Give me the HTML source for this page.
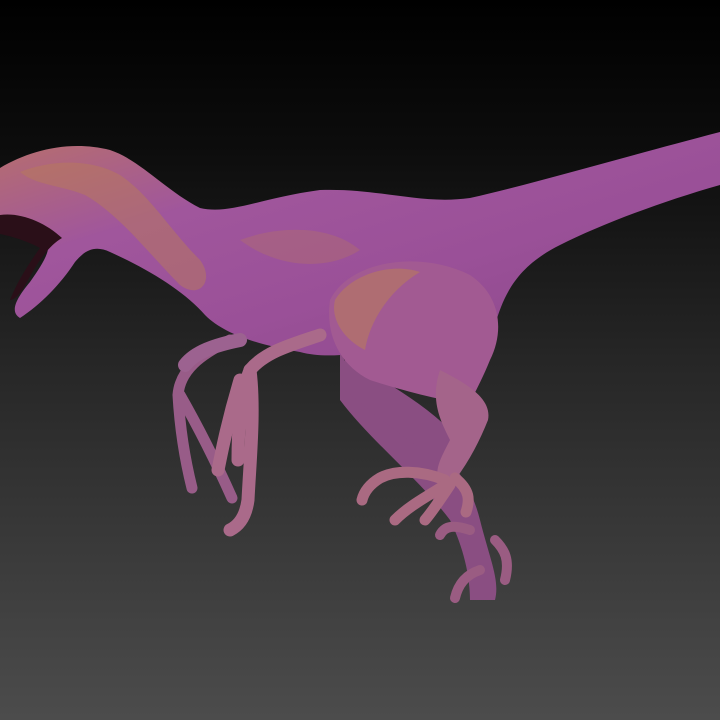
<!DOCTYPE html>
<html><head><meta charset="utf-8"><style>
html,body{margin:0;padding:0;width:720px;height:720px;overflow:hidden;background:#000}
svg{display:block}
</style></head><body>
<svg width="720" height="720" viewBox="0 0 720 720" xmlns="http://www.w3.org/2000/svg">
<defs>
<linearGradient id="bg" x1="0" y1="0" x2="0" y2="1">
<stop offset="0" stop-color="#000"/>
<stop offset="0.2" stop-color="#0c0c0c"/>
<stop offset="0.5" stop-color="#262626"/>
<stop offset="1" stop-color="#4c4c4c"/>
</linearGradient>
<linearGradient id="skin" x1="0" y1="0" x2="1" y2="1">
<stop offset="0" stop-color="#b8706a"/>
<stop offset="0.3" stop-color="#a0569c"/>
<stop offset="0.6" stop-color="#9a5098"/>
<stop offset="1" stop-color="#8a4888"/>
</linearGradient>
</defs>
<rect width="720" height="720" fill="url(#bg)"/>
<path d="M340,350 C360,400 400,420 430,440 C450,460 470,480 480,520 C490,560 500,580 495,600 L470,600 C470,570 460,540 450,520 C420,480 370,440 340,400 Z" fill="#8a4e82"/>
<path d="M345,355 C380,380 420,400 450,430 L455,470 C420,450 380,420 345,390 Z" fill="#8a4e82"/>
<g stroke="#9a5c82" stroke-width="10" stroke-linecap="round" fill="none">
<path d="M470,530 C455,525 445,525 440,535"/>
<path d="M480,570 C465,575 458,585 455,598"/>
<path d="M495,540 C505,550 510,560 505,580"/>
</g>
<g stroke="#985c88" stroke-width="11" stroke-linecap="round" fill="none">
<path d="M230,340 C200,355 180,370 178,395 C180,430 185,460 192,488"/>
<path d="M180,395 C200,430 215,460 232,498"/>
</g>
<path d="M0,168 C30,150 70,140 110,150 C140,160 165,190 200,208 C230,215 260,198 320,190 C380,188 420,205 470,198 C540,182 620,158 720,132 L720,185 C660,202 600,225 560,245 C520,265 505,290 495,325 C480,345 440,352 400,348 C360,352 330,360 300,352 C260,345 225,335 205,315 C185,292 150,270 110,252 C95,245 85,250 75,262 C60,285 40,305 20,318 C10,312 15,300 30,282 C40,268 48,255 48,248 C30,242 12,236 0,230 Z" fill="url(#skin)"/>
<path d="M20,172 C50,160 90,158 120,175 C150,195 170,230 200,260 C215,280 200,300 180,285 C150,255 120,215 85,195 C60,185 35,185 20,172 Z" fill="#b87a5a" opacity="0.5"/>
<path d="M240,240 C280,225 330,225 360,250 C330,270 280,270 240,240 Z" fill="#b87a5a" opacity="0.3"/>
<path d="M0,215 C20,212 45,222 62,238 C50,245 40,258 28,280 C22,292 15,300 10,300 C18,280 30,262 40,248 C25,240 10,236 0,234 Z" fill="#2a0f18"/>
<path d="M330,300 C350,260 420,250 470,275 C500,295 505,330 490,360 C480,385 470,400 470,405 C440,400 400,390 370,380 C340,365 325,335 330,300 Z" fill="#a25a92"/>
<path d="M335,300 C350,275 390,262 420,272 C390,290 370,320 365,350 C345,340 330,320 335,300 Z" fill="#b87a5e" opacity="0.6"/>
<path d="M440,370 C470,385 492,400 488,420 C480,440 470,460 455,480 L445,490 C430,475 440,460 450,440 C440,420 430,400 440,370 Z" fill="#a4648a"/>
<g stroke="#aa6a82" stroke-width="11" stroke-linecap="round" fill="none">
<path d="M445,480 C420,470 395,470 380,478 C370,484 364,492 362,500"/>
<path d="M445,485 C430,495 410,505 395,520"/>
<path d="M450,485 C440,500 432,512 425,520"/>
<path d="M455,478 C470,490 470,500 466,512"/>
</g>
<g stroke="#aa6a8a" stroke-width="13" stroke-linecap="round" fill="none">
<path d="M320,335 C290,345 265,352 250,370 C240,395 238,430 238,460"/>
<path d="M250,370 C255,410 250,460 248,500 C246,515 240,525 230,530"/>
<path d="M240,380 C228,420 222,450 218,470"/>
</g>
<path d="M240,340 C215,345 195,352 185,365" stroke="#9c6290" stroke-width="14" stroke-linecap="round" fill="none"/>
</svg>
</body></html>
